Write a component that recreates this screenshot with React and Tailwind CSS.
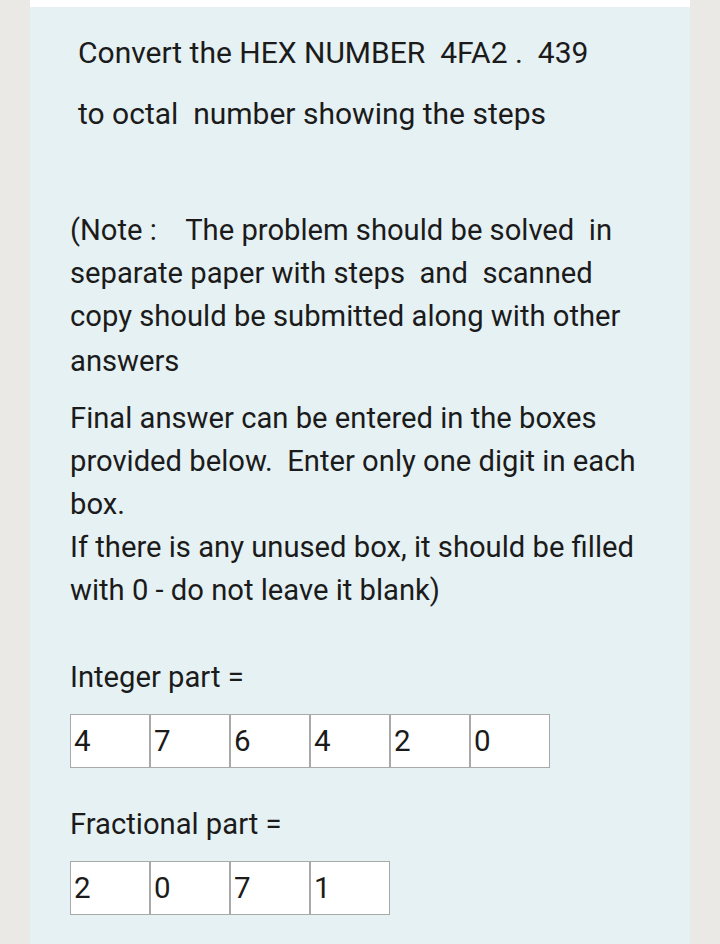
const Boxes = ({ digits }) => (
  <div className="flex">
    {digits.map((d, i) => (
      <div
        key={i}
        className="w-[80px] h-[54px] bg-white border border-[#a9a9a9] flex items-center pl-[3px] text-[29.5px]"
      >
        {d}
      </div>
    ))}
  </div>
);

const App = () => {
  return (
    <div
      className="min-h-[944px] bg-[#ebe9e6] text-[#1b1b1b] overflow-hidden"
      style={{ fontFamily: "Roboto, 'Noto Sans', sans-serif" }}
    >
      <div className="mx-[30px] w-[660px]">
        <div className="h-[7px] bg-white" />
        <div className="bg-[#e6f1f3] h-[937px] pl-[40px] pt-[24px] text-[29.2px] leading-[43px] whitespace-nowrap">
          <div className="pl-[8px] text-[30px]">
            <div>Convert the HEX NUMBER&nbsp; 4FA2 .&nbsp; 439</div>
            <div className="mt-[18px]">to octal&nbsp; number showing the steps</div>
          </div>

          <div className="mt-[74px]">
            <div>(Note :&nbsp;&nbsp;&nbsp; The problem should be solved&nbsp; in</div>
            <div>separate paper with steps&nbsp; and&nbsp; scanned</div>
            <div>copy should be submitted along with other</div>
            <div className="mt-[2px]">answers</div>
          </div>

          <div className="mt-[14px]">
            <div>Final answer can be entered in the boxes</div>
            <div>provided below.&nbsp; Enter only one digit in each</div>
            <div>box.</div>
            <div>If there is any unused box, it should be filled</div>
            <div>with 0 - do not leave it blank)</div>
          </div>

          <div className="mt-[44px]">Integer part =</div>
          <div className="mt-[15px]">
            <Boxes digits={["4", "7", "6", "4", "2", "0"]} />
          </div>

          <div className="mt-[35px]">Fractional part =</div>
          <div className="mt-[15px]">
            <Boxes digits={["2", "0", "7", "1"]} />
          </div>
        </div>
      </div>
    </div>
  );
};

export default App;
